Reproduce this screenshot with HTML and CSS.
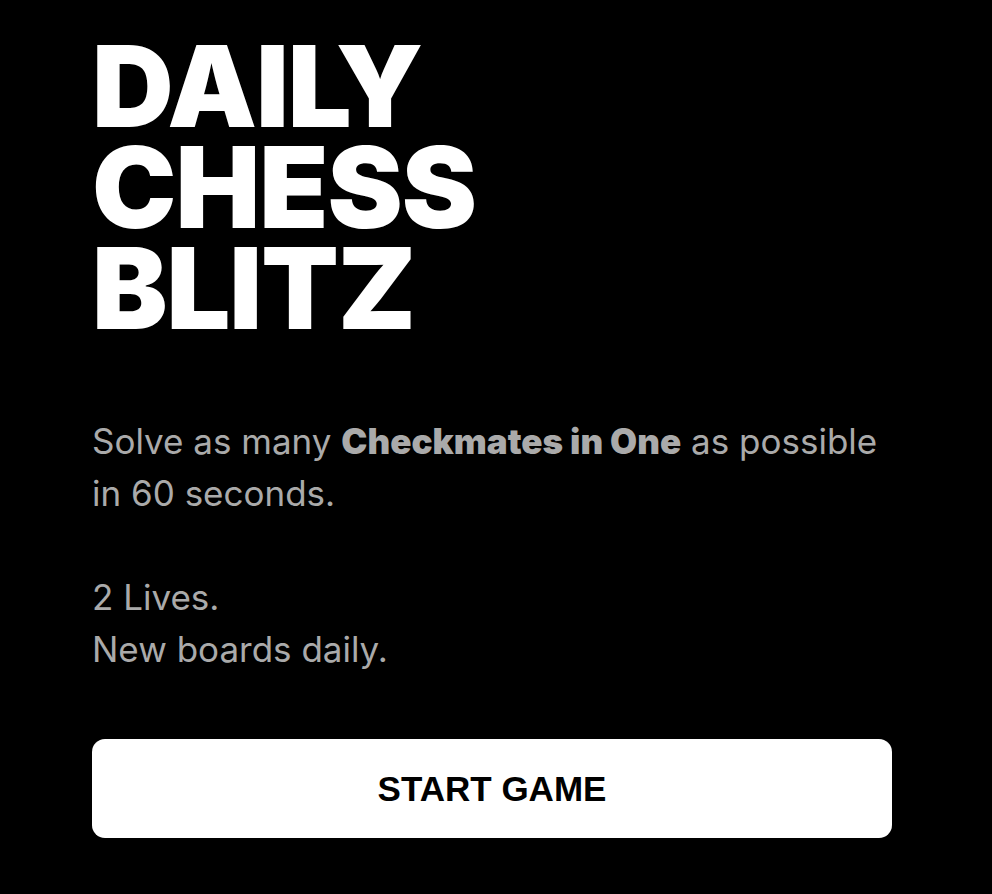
FILE: index.html
```html
<!DOCTYPE html>
<html lang="en">
<head>
    <meta charset="UTF-8">
    <meta name="viewport" content="width=device-width, initial-scale=1.0">
    <title>Daily Chess Blitz</title>
    <link rel="stylesheet" href="styles.css">
</head>
<body>
    <!-- Intro Screen -->
    <main class="intro">
        <h1 class="intro-title">DAILY<br>CHESS<br>BLITZ</h1>
        <p class="intro-text">
            Solve as many <strong>Checkmates in One</strong> as possible in 60 seconds.
        </p>
        <p class="intro-text">
            2 Lives.<br>
            New boards daily.
        </p>
        <button id="start-game" class="start-button">START GAME</button>
    </main>
</body>
</html>
```

FILE: styles.css
```css
body {
    margin: 0;
    background: #000;
    font-family: Inter, 'Noto Sans', sans-serif;
}

.intro {
    width: 800px;
    padding: 36px 0 0 92px;
}

.intro-title {
    margin: 0 0 76px 0;
    color: white;
    font-size: 113px;
    font-weight: 900;
    line-height: 101px;
    letter-spacing: -1px;
}

.intro-text {
    margin: 0 0 52px 0;
    color: #aaa;
    font-size: 35px;
    line-height: 52px;
}

.intro-text strong {
    font-weight: 900;
}

.start-button {
    display: block;
    width: 800px;
    height: 99px;
    margin-top: 64px;
    background: white;
    color: black;
    border: none;
    border-radius: 13px;
    font-family: 'Liberation Sans', Arial, sans-serif;
    font-size: 35px;
    font-weight: bold;
    cursor: pointer;
}
```
